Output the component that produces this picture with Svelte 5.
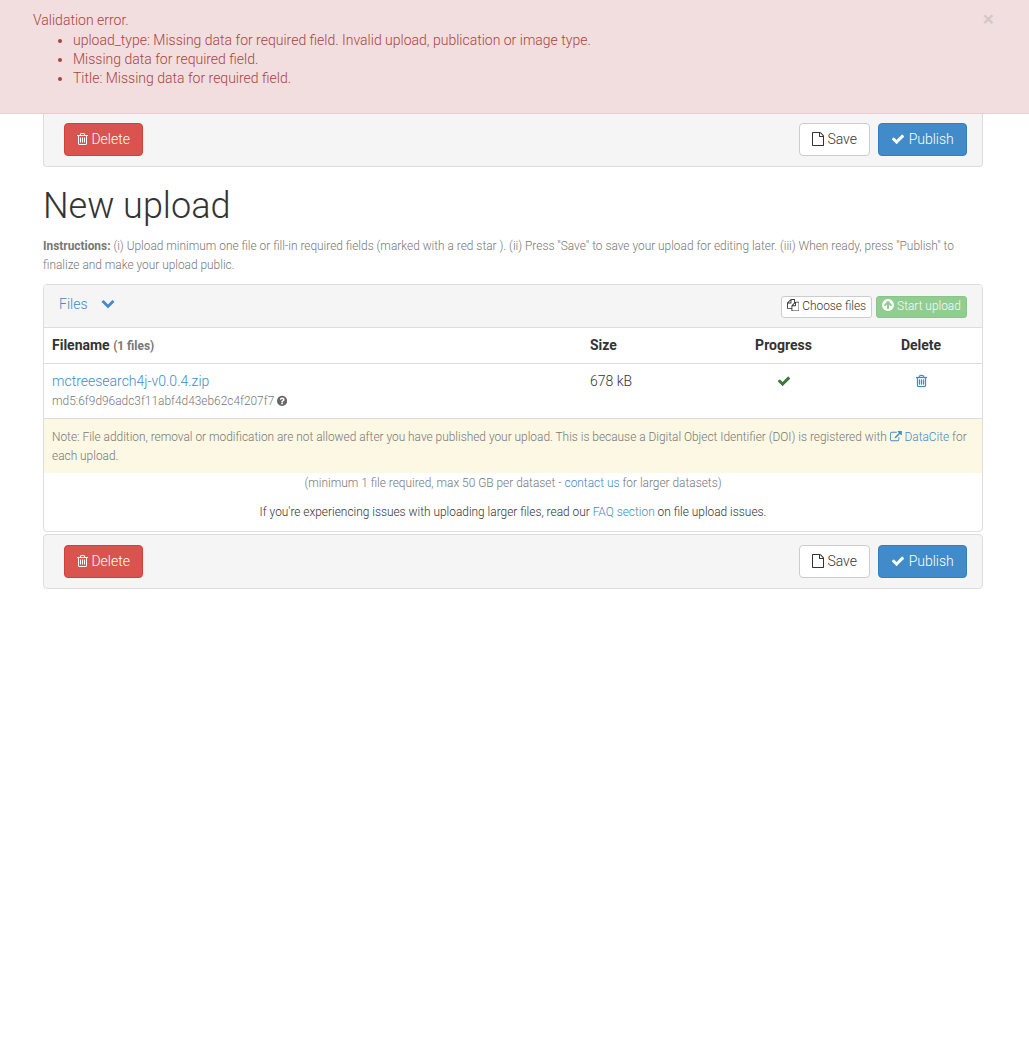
<script lang="ts">
  // FontAwesome-style glyphs on a 1792 grid; w is the glyph's advance width
  const icons: Record<string, { w: number; d: string }> = {
    trash: { w: 1408, d: 'M704 736v576q0 14-9 23t-23 9h-64q-14 0-23-9t-9-23v-576q0-14 9-23t23-9h64q14 0 23 9t9 23zm256 0v576q0 14-9 23t-23 9h-64q-14 0-23-9t-9-23v-576q0-14 9-23t23-9h64q14 0 23 9t9 23zm256 0v576q0 14-9 23t-23 9h-64q-14 0-23-9t-9-23v-576q0-14 9-23t23-9h64q14 0 23 9t9 23zm128 724v-948h-896v948q0 22 7 40.5t14.5 27 10.5 8.5h832q3 0 10.5-8.5t14.5-27 7-40.5zm-672-1076h448l-48-117q-7-9-17-11h-317q-10 2-17 11zm928 32v64q0 14-9 23t-23 9h-96v948q0 83-47 143.5t-113 60.5h-832q-66 0-113-58.5t-47-141.5v-952h-96q-14 0-23-9t-9-23v-64q0-14 9-23t23-9h309l70-167q15-37 54-63t79-26h320q40 0 79 26t54 63l70 167h309q14 0 23 9t9 23z' },
    file: { w: 1536, d: 'M1596 380q28 28 48 76t20 88v1152q0 40-28 68t-68 28h-1344q-40 0-68-28t-28-68v-1600q0-40 28-68t68-28h896q40 0 88 20t76 48zm-444-244v376h376q-10-29-22-41l-313-313q-12-12-41-22zm384 1528v-1024h-416q-40 0-68-28t-28-68v-416h-768v1536h1280z' },
    check: { w: 1792, d: 'M1671 566q0 40-28 68l-724 724-136 136q-28 28-68 28t-68-28l-136-136-362-362q-28-28-28-68t28-68l136-136q28-28 68-28t68 28l294 295 656-657q28-28 68-28t68 28l136 136q28 28 28 68z' },
    chevron: { w: 1792, d: 'M1683 808l-742 741q-19 19-45 19t-45-19l-742-741q-19-19-19-45.5t19-45.5l166-165q19-19 45-19t45 19l531 531 531-531q19-19 45-19t45 19l166 165q19 19 19 45.5t-19 45.5z' },
    files: { w: 1792, d: 'M1696 384q40 0 68 28t28 68v1216q0 40-28 68t-68 28h-960q-40 0-68-28t-28-68v-288h-544q-40 0-68-28t-28-68v-672q0-40 20-88t48-76l408-408q28-28 76-48t88-20h416q40 0 68 28t28 68v328q68-40 128-40h416zm-544 213l-299 299h299v-299zm-640-384l-299 299h299v-299zm196 647l316-316v-416h-384v416q0 40-28 68t-68 28h-416v640h512v-256q0-40 20-88t48-76zm956 804v-1152h-384v416q0 40-28 68t-68 28h-416v640h896z' },
    up: { w: 1536, d: 'M1412 895q0-27-18-45l-362-362-91-91q-18-18-45-18t-45 18l-91 91-362 362q-18 18-18 45t18 45l91 91q18 18 45 18t45-18l189-189v502q0 26 19 45t45 19h128q26 0 45-19t19-45v-502l189 189q19 19 45 19t45-19l91-91q18-18 18-45zm252 1q0 209-103 385.5t-279.5 279.5-385.5 103-385.5-103-279.5-279.5-103-385.5 103-385.5 279.5-279.5 385.5-103 385.5 103 279.5 279.5 103 385.5z' },
    question: { w: 1536, d: 'M1024 1376v-192q0-14-9-23t-23-9h-192q-14 0-23 9t-9 23v192q0 14 9 23t23 9h192q14 0 23-9t9-23zm256-672q0-88-55.5-163t-138.5-116-170-41q-243 0-371 213-15 24 8 42l132 100q7 6 19 6 16 0 25-12 53-68 86-92 34-24 86-24 48 0 85.5 26t37.5 59q0 38-20 61t-68 45q-63 28-115.5 86.5t-52.5 125.5v36q0 14 9 23t23 9h192q14 0 23-9t9-23q0-19 21.5-49.5t54.5-49.5q32-18 49-28.5t46-35 44.5-48 28-60.5 12.5-81zm384 192q0 209-103 385.5t-279.5 279.5-385.5 103-385.5-103-279.5-279.5-103-385.5 103-385.5 279.5-279.5 385.5-103 385.5 103 279.5 279.5 103 385.5z' },
    external: { w: 1792, d: 'M1408 928v320q0 119-84.5 203.5t-203.5 84.5h-832q-119 0-203.5-84.5t-84.5-203.5v-832q0-119 84.5-203.5t203.5-84.5h704q14 0 23 9t9 23v64q0 14-9 23t-23 9h-704q-66 0-113 47t-47 113v832q0 66 47 113t113 47h832q66 0 113-47t47-113v-320q0-14 9-23t23-9h64q14 0 23 9t9 23zm384-864v512q0 26-19 45t-45 19-45-19l-176-176-652 652q-10 10-23 10t-23-10l-114-114q-10-10-10-23t10-23l652-652-176-176q-19-19-19-45t19-45 45-19h512q26 0 45 19t19 45z' },
  };

  const errors = [
    'upload_type: Missing data for required field. Invalid upload, publication or image type.',
    'Missing data for required field.',
    'Title: Missing data for required field.',
  ];
</script>

{#snippet icon(name)}
  {@const g = icons[name]}
  <svg
    class="fa"
    style:width="{g.w / 1792}em"
    viewBox="{(1792 - g.w) / 2} 0 {g.w} 1792"
    aria-hidden="true"><path d={g.d} /></svg>
{/snippet}

{#snippet actions()}
  <button class="btn danger">{@render icon('trash')} Delete</button>
  <span class="right">
    <button class="btn plain">{@render icon('file')} Save</button>
    <button class="btn primary">{@render icon('check')} Publish</button>
  </span>
{/snippet}

<div class="alert">
  <span class="close">×</span>
  Validation error.
  <ul>
    {#each errors as e}
      <li>{e}</li>
    {/each}
  </ul>
</div>

<div class="container">
  <div class="bar first">{@render actions()}</div>

  <h1>New upload</h1>
  <p class="help">
    <strong>Instructions:</strong> (i) Upload minimum one file or fill-in required fields (marked with a red star ). (ii) Press "Save" to save your upload for editing later. (iii) When ready, press "Publish" to finalize and make your upload public.
  </p>

  <section class="panel">
    <header>
      <a href="#files" class="title">Files <span class="chev">{@render icon('chevron')}</span></a>
      <span class="right tight">
        <button class="btn small plain">{@render icon('files')} Choose files</button>
        <button class="btn small success">{@render icon('up')} Start upload</button>
      </span>
    </header>

    <div class="row head">
      <div class="c-name">Filename <small>(1 files)</small></div>
      <div class="c-size">Size</div>
      <div class="c-progress">Progress</div>
      <div class="c-delete">Delete</div>
    </div>
    <div class="row file">
      <div class="c-name">
        <a href="#file">mctreesearch4j-v0.0.4.zip</a>
        <div class="md5">md5:6f9d96adc3f11abf4d43eb62c4f207f7 <span class="q">{@render icon('question')}</span></div>
      </div>
      <div class="c-size">678 kB</div>
      <div class="c-progress"><span class="ok">{@render icon('check')}</span></div>
      <div class="c-delete"><span class="bin">{@render icon('trash')}</span></div>
    </div>

    <div class="note">
      Note: File addition, removal or modification are not allowed after you have published your upload. This is because a Digital Object Identifier (DOI) is registered with <a href="#dc">{@render icon('external')} DataCite</a> for each upload.
    </div>
    <p class="limit">(minimum 1 file required, max 50 GB per dataset - <a href="#c">contact us</a> for larger datasets)</p>
    <p class="issues">If you're experiencing issues with uploading larger files, read our <a href="#faq">FAQ section</a> on file upload issues.</p>
  </section>

  <div class="bar last">{@render actions()}</div>
</div>

<style>
  :global(body) {
    margin: 0;
    background: #fff;
    font-family: Roboto, "Liberation Sans", sans-serif;
    font-weight: 300;
    font-size: 14px;
    line-height: 1.42857;
    color: #333;
  }
  a {
    color: #428bca;
    text-decoration: none;
  }
  .fa {
    height: 1em;
    fill: currentColor;
    vertical-align: -0.143em;
  }
  .alert {
    box-sizing: border-box;
    height: 114px;
    padding: 11px 33px 0;
    background: #f2dede;
    border-bottom: 1px solid #ebccd1;
    color: #a94442;
    position: relative;
    line-height: 19px;
  }
  .alert ul {
    margin: 1px 0 0;
    padding-left: 40px;
  }
  .close {
    position: absolute;
    top: 9px;
    right: 35px;
    font-size: 21px;
    font-weight: 700;
    line-height: 1;
    color: #000;
    opacity: 0.1;
  }
  .container {
    width: 940px;
    margin: 0 auto 0 43px;
  }
  .bar {
    box-sizing: border-box;
    height: 54px;
    padding: 10px 15px 10px 20px;
    display: flex;
    justify-content: space-between;
    align-items: flex-start;
    background: #f5f5f5;
    border: 1px solid #ddd;
    border-radius: 4px;
    margin-top: 2px;
  }
  .bar.first {
    margin-top: -1px;
    border-top: 0;
    border-radius: 0 0 4px 4px;
  }
  .bar.last {
    height: 55px;
  }
  .right {
    display: flex;
    gap: 8px;
  }
  .right.tight {
    gap: 4px;
    margin-top: 1px;
    align-self: flex-start;
  }
  .btn {
    box-sizing: border-box;
    height: 33px;
    padding: 0 12px;
    font: inherit;
    font-size: 14px;
    border: 1px solid transparent;
    border-radius: 4px;
    white-space: nowrap;
  }
  .btn.danger {
    width: 79px;
    background: #d9534f;
    border-color: #d43f3a;
    color: #fff;
  }
  .btn.plain {
    width: 71px;
    background: #fff;
    border-color: #ccc;
    color: #333;
  }
  .btn.primary {
    width: 89px;
    background: #428bca;
    border-color: #357ebd;
    color: #fff;
  }
  .btn.small {
    height: 22px;
    width: 91px;
    padding: 0 0 2px;
    font-size: 11.9px;
    border-radius: 3px;
  }
  .btn.small .fa {
    font-size: 14px;
  }
  .btn.small.plain .fa {
    font-size: 12.5px;
  }
  .btn.success {
    background: #5cb85c;
    border-color: #4cae4c;
    color: #fff;
    opacity: 0.65;
  }
  h1 {
    margin: 20px 0 12px;
    font-size: 36px;
    font-weight: 300;
    line-height: 38px;
  }
  .help {
    margin: 0 0 9px;
    font-size: 11.9px;
    line-height: 19px;
    color: #777;
  }
  .help strong {
    font-weight: 700;
  }
  .panel {
    border: 1px solid #ddd;
    border-radius: 4px;
    overflow: hidden;
  }
  header {
    height: 43px;
    box-sizing: border-box;
    padding: 10px 15px 0;
    background: #f5f5f5;
    border-bottom: 1px solid #ddd;
    display: flex;
    justify-content: space-between;
  }
  .title {
    font-size: 14px;
    line-height: 18px;
  }
  .chev {
    margin-left: 10px;
    font-size: 14px;
    position: relative;
    top: -1px;
  }
  .row {
    display: grid;
    grid-template-columns: 538px 110px 167px 1fr;
    padding: 0 7px 0 8px;
    border-bottom: 1px solid #ddd;
  }
  .head {
    box-sizing: border-box;
    height: 36px;
    padding-top: 1px;
    align-items: center;
    font-weight: 700;
  }
  .head small {
    font-size: 11.9px;
    color: #777;
  }
  .file {
    height: 55px;
    padding-top: 8px;
    box-sizing: border-box;
  }
  .c-progress,
  .c-delete {
    text-align: center;
  }
  .md5 {
    font-size: 11.9px;
    color: #777;
    line-height: 19px;
  }
  .q {
    color: #666;
  }
  .ok {
    color: #3c763d;
  }
  .bin {
    color: #428bca;
    stroke: #428bca;
    stroke-width: 30;
  }
  .note {
    box-sizing: border-box;
    height: 54px;
    padding: 9px 8px 0;
    background: #fcf8e3;
    font-size: 11.9px;
    line-height: 19px;
    color: #777;
  }
  .limit,
  .issues {
    margin: 0;
    text-align: center;
    font-size: 11.9px;
  }
  .limit {
    color: #777;
    padding-top: 1px;
    line-height: 18px;
  }
  .issues {
    padding: 11px 0 10px;
    line-height: 18px;
  }
</style>
